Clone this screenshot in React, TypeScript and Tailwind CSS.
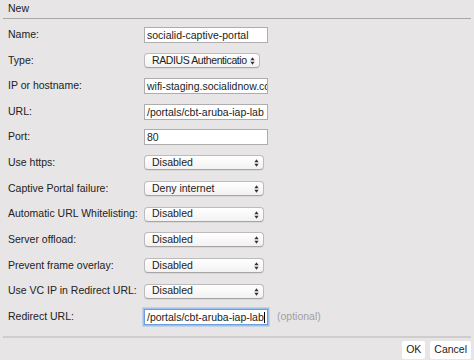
import React from 'react'

const font = { fontFamily: '"Liberation Sans", Arial, sans-serif' }

const field = "h-[16px] border bg-white px-[2px] text-[10.5px] leading-[14px] text-[#222] outline-none"
const selectBox = "relative flex h-[15px] items-center rounded-[4px] border border-[#bcbaba] border-b-[#a6a4a4] bg-gradient-to-b from-white to-[#f2f2f2] pl-[7px] text-[10.5px] text-[#222] shadow-[0_1px_0_rgba(0,0,0,0.06)]"

function Arrows() {
  return (
    <svg className="absolute right-[4px] top-[3px]" width="5" height="8" viewBox="0 0 5 8">
      <path d="M2.5 0.3 L4.6 3.2 L0.4 3.2 Z" fill="#333" />
      <path d="M2.5 7.7 L4.6 4.8 L0.4 4.8 Z" fill="#333" />
    </svg>
  )
}

function TextInput({ value, focus = false }: { value: string; focus?: boolean }) {
  return (
    <div
      className={`${field} w-[124px] overflow-hidden whitespace-nowrap ${focus ? 'border-[#6f9fd8] shadow-[0_0_0_1.5px_#9cc0ea]' : 'border-[#aeacac]'}`}
    >
      {value}
      {focus && <span className="inline-block h-[11px] w-px translate-y-[2px] bg-black align-baseline" />}
    </div>
  )
}

function Select({ value, narrow = false }: { value: string; narrow?: boolean }) {
  return (
    <div className={`${selectBox} ${narrow ? 'w-[116px] pl-[6px] tracking-[-0.4px]' : 'w-[120px]'}`}>
      <span className="mr-[9px] min-w-0 whitespace-nowrap">{value}</span>
      <Arrows />
    </div>
  )
}

type Row = { label: string; kind: 'text' | 'select'; value: string; focus?: boolean; note?: string; narrow?: boolean }

const rows: Row[] = [
  { label: 'Name:', kind: 'text', value: 'socialid-captive-portal' },
  { label: 'Type:', kind: 'select', value: 'RADIUS Authenticatio', narrow: true },
  { label: 'IP or hostname:', kind: 'text', value: 'wifi-staging.socialidnow.com' },
  { label: 'URL:', kind: 'text', value: '/portals/cbt-aruba-iap-lab' },
  { label: 'Port:', kind: 'text', value: '80' },
  { label: 'Use https:', kind: 'select', value: 'Disabled' },
  { label: 'Captive Portal failure:', kind: 'select', value: 'Deny internet' },
  { label: 'Automatic URL Whitelisting:', kind: 'select', value: 'Disabled' },
  { label: 'Server offload:', kind: 'select', value: 'Disabled' },
  { label: 'Prevent frame overlay:', kind: 'select', value: 'Disabled' },
  { label: 'Use VC IP in Redirect URL:', kind: 'select', value: 'Disabled' },
  { label: 'Redirect URL:', kind: 'text', value: '/portals/cbt-aruba-iap-lab', focus: true, note: '(optional)' },
]

export default function App() {
  return (
    <div className="h-[360px] w-[474px] overflow-hidden bg-[#e7e5e5] text-[#222]" style={font}>
      <div className="mx-[3px] flex h-[19px] items-center border-b border-[#a9a8a8] pl-[5px] text-[10.5px]">
        New
      </div>
      <div className="pt-[3px]">
        {rows.map(r => (
          <div key={r.label} className="flex h-[25.64px] items-center pl-[8px] text-[10.5px]">
            <div className="w-[136px] shrink-0">{r.label}</div>
            {r.kind === 'text' ? (
              <TextInput value={r.value} focus={r.focus} />
            ) : (
              <Select value={r.value} narrow={r.narrow} />
            )}
            {r.note && <span className="ml-[9px] text-[#a3a1a1]">{r.note}</span>}
          </div>
        ))}
      </div>
      <div className="mx-[3px] mt-[6px] border-t-2 border-[#cfcdcd]" />
      <div className="flex justify-end gap-[5px] pr-[3px] pt-[3px] text-[10.5px]">
        <button className="h-[18px] rounded-[2px] bg-white px-[4px] text-[#222]">OK</button>
        <button className="h-[18px] rounded-[2px] bg-white px-[4px] text-[#222]">Cancel</button>
      </div>
    </div>
  )
}
